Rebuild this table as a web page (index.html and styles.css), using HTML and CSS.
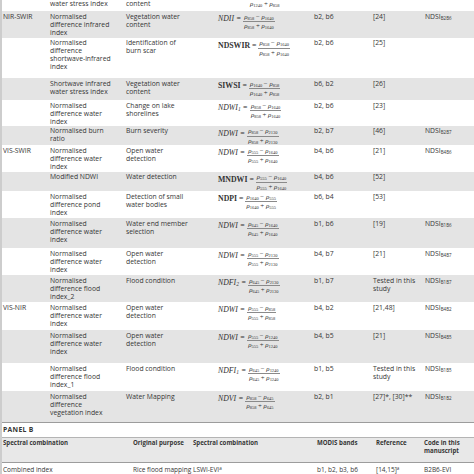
FILE: index.html
```html
<!DOCTYPE html>
<html lang="en">
<head>
<meta charset="utf-8">
<title>Spectral indices table</title>
<link rel="stylesheet" href="styles.css">
</head>
<body>
<div class="page">
<table class="pa">
<colgroup><col class="a1"><col class="a2"><col class="a3"><col class="a4"><col class="a5"><col class="a6"><col class="a7"></colgroup>
<tbody>
<tr class="h11 top">
<td></td><td>water stress index</td><td>content</td>
<td><span class="f tail"><span class="frac"><span class="den"><i>ρ</i><sub>1240</sub> + <i>ρ</i><sub>858</sub></span></span></span></td>
<td></td><td></td><td></td>
</tr>
<tr class="g h26">
<td>NIR-SWIR</td><td>Normalised<br>difference infrared<br>index</td><td>Vegetation water<br>content</td>
<td><span class="f"><span class="lbl it">NDII =</span><span class="frac"><span class="num"><i>ρ</i><sub>858</sub> − <i>ρ</i><sub>1640</sub></span><span class="den"><i>ρ</i><sub>858</sub> + <i>ρ</i><sub>1640</sub></span></span></span></td>
<td>b2, b6</td><td>[24]</td><td>NDSI<sub>B2B6</sub></td>
</tr>
<tr class="h40">
<td></td><td>Normalised<br>difference<br>shortwave-infrared<br>index</td><td>Identification of<br>burn scar</td>
<td><span class="f"><span class="lbl bd">NDSWIR =</span><span class="frac"><span class="num"><i>ρ</i><sub>858</sub> − <i>ρ</i><sub>1640</sub></span><span class="den"><i>ρ</i><sub>858</sub> + <i>ρ</i><sub>1640</sub></span></span></span></td>
<td>b2, b6</td><td>[25]</td><td></td>
</tr>
<tr class="g h22">
<td></td><td>Shortwave infrared<br>water stress index</td><td>Vegetation water<br>content</td>
<td><span class="f"><span class="lbl bd">SIWSI =</span><span class="frac"><span class="num"><i>ρ</i><sub>1640</sub> − <i>ρ</i><sub>858</sub></span><span class="den"><i>ρ</i><sub>1640</sub> + <i>ρ</i><sub>858</sub></span></span></span></td>
<td>b6, b2</td><td>[26]</td><td></td>
</tr>
<tr class="h24">
<td></td><td>Normalised<br>difference water<br>index</td><td>Change on lake<br>shorelines</td>
<td><span class="f"><span class="lbl it">NDWI<sub>1</sub> =</span><span class="frac"><span class="num"><i>ρ</i><sub>858</sub> − <i>ρ</i><sub>1640</sub></span><span class="den"><i>ρ</i><sub>858</sub> + <i>ρ</i><sub>1640</sub></span></span></span></td>
<td>b2, b6</td><td>[23]</td><td></td>
</tr>
<tr class="g h19">
<td></td><td>Normalised burn<br>ratio</td><td>Burn severity</td>
<td><span class="f"><span class="lbl it">NDWI =</span><span class="frac"><span class="num"><i>ρ</i><sub>858</sub> − <i>ρ</i><sub>2130</sub></span><span class="den"><i>ρ</i><sub>858</sub> + <i>ρ</i><sub>2130</sub></span></span></span></td>
<td>b2, b7</td><td>[46]</td><td>NDSI<sub>B2B7</sub></td>
</tr>
<tr class="h26">
<td>VIS-SWIR</td><td>Normalised<br>difference water<br>index</td><td>Open water<br>detection</td>
<td><span class="f"><span class="lbl it">NDWI =</span><span class="frac"><span class="num"><i>ρ</i><sub>555</sub> − <i>ρ</i><sub>1640</sub></span><span class="den"><i>ρ</i><sub>555</sub> + <i>ρ</i><sub>1640</sub></span></span></span></td>
<td>b4, b6</td><td>[21]</td><td>NDSI<sub>B4B6</sub></td>
</tr>
<tr class="g h19">
<td></td><td>Modified NDWI</td><td>Water detection</td>
<td><span class="f"><span class="lbl bd">MNDWI =</span><span class="frac"><span class="num"><i>ρ</i><sub>555</sub> − <i>ρ</i><sub>1640</sub></span><span class="den"><i>ρ</i><sub>555</sub> + <i>ρ</i><sub>1640</sub></span></span></span></td>
<td>b4, b6</td><td>[52]</td><td></td>
</tr>
<tr class="h27">
<td></td><td>Normalised<br>difference pond<br>index</td><td>Detection of small<br>water bodies</td>
<td><span class="f"><span class="lbl bd">NDPI =</span><span class="frac"><span class="num"><i>ρ</i><sub>1640</sub> − <i>ρ</i><sub>555</sub></span><span class="den"><i>ρ</i><sub>1640</sub> + <i>ρ</i><sub>555</sub></span></span></span></td>
<td>b6, b4</td><td>[53]</td><td></td>
</tr>
<tr class="g h30">
<td></td><td>Normalised<br>difference water<br>index</td><td>Water end member<br>selection</td>
<td><span class="f"><span class="lbl it">NDWI =</span><span class="frac"><span class="num"><i>ρ</i><sub>645</sub> − <i>ρ</i><sub>1640</sub></span><span class="den"><i>ρ</i><sub>645</sub> + <i>ρ</i><sub>1640</sub></span></span></span></td>
<td>b1, b6</td><td>[19]</td><td>NDSI<sub>B1B6</sub></td>
</tr>
<tr class="h27">
<td></td><td>Normalised<br>difference water<br>index</td><td>Open water<br>detection</td>
<td><span class="f"><span class="lbl it">NDWI =</span><span class="frac"><span class="num"><i>ρ</i><sub>555</sub> − <i>ρ</i><sub>2130</sub></span><span class="den"><i>ρ</i><sub>555</sub> + <i>ρ</i><sub>2130</sub></span></span></span></td>
<td>b4, b7</td><td>[21]</td><td>NDSI<sub>B4B7</sub></td>
</tr>
<tr class="g h27">
<td></td><td>Normalised<br>difference flood<br>index_2</td><td>Flood condition</td>
<td><span class="f"><span class="lbl it">NDFI<sub>2</sub> =</span><span class="frac"><span class="num"><i>ρ</i><sub>645</sub> − <i>ρ</i><sub>2130</sub></span><span class="den"><i>ρ</i><sub>645</sub> + <i>ρ</i><sub>2130</sub></span></span></span></td>
<td>b1, b7</td><td>Tested in this<br>study</td><td>NDSI<sub>B1B7</sub></td>
</tr>
<tr class="h28">
<td>VIS-NIR</td><td>Normalised<br>difference water<br>index</td><td>Open water<br>detection</td>
<td><span class="f"><span class="lbl it">NDWI =</span><span class="frac"><span class="num"><i>ρ</i><sub>555</sub> − <i>ρ</i><sub>858</sub></span><span class="den"><i>ρ</i><sub>555</sub> + <i>ρ</i><sub>858</sub></span></span></span></td>
<td>b4, b2</td><td>[21,48]</td><td>NDSI<sub>B4B2</sub></td>
</tr>
<tr class="g h33">
<td></td><td>Normalised<br>difference water<br>index</td><td>Open water<br>detection</td>
<td><span class="f"><span class="lbl it">NDWI =</span><span class="frac"><span class="num"><i>ρ</i><sub>555</sub> − <i>ρ</i><sub>1240</sub></span><span class="den"><i>ρ</i><sub>555</sub> + <i>ρ</i><sub>1240</sub></span></span></span></td>
<td>b4, b5</td><td>[21]</td><td>NDSI<sub>B4B5</sub></td>
</tr>
<tr class="h28">
<td></td><td>Normalised<br>difference flood<br>index_1</td><td>Flood condition</td>
<td><span class="f"><span class="lbl it">NDFI<sub>1</sub> =</span><span class="frac"><span class="num"><i>ρ</i><sub>645</sub> − <i>ρ</i><sub>1240</sub></span><span class="den"><i>ρ</i><sub>645</sub> + <i>ρ</i><sub>1240</sub></span></span></span></td>
<td>b1, b5</td><td>Tested in this<br>study</td><td>NDSI<sub>B1B5</sub></td>
</tr>
<tr class="g h31">
<td></td><td>Normalised<br>difference<br>vegetation index</td><td>Water Mapping</td>
<td><span class="f"><span class="lbl it">NDVI =</span><span class="frac"><span class="num"><i>ρ</i><sub>858</sub> − <i>ρ</i><sub>645</sub></span><span class="den"><i>ρ</i><sub>858</sub> + <i>ρ</i><sub>645</sub></span></span></span></td>
<td>b2, b1</td><td>[27]*, [30]**</td><td>NDSI<sub>B1B2</sub></td>
</tr>
</tbody>
</table>
<div class="panel">PANEL B</div>
<table class="pb">
<colgroup><col class="b1"><col class="b2"><col class="b3"><col class="b4"><col class="b5"><col class="b6"></colgroup>
<thead>
<tr><th>Spectral combination</th><th>Original purpose</th><th>Spectral combination</th><th>MODIS bands</th><th>Reference</th><th>Code in this<br>manuscript</th></tr>
</thead>
<tbody>
<tr><td>Combined index</td><td>Rice flood mapping</td><td>LSWI-EVI<sup>a</sup></td><td>b1, b2, b3, b6</td><td>[14,15]<sup>a</sup></td><td>B2B6-EVI</td></tr>
</tbody>
</table>
</div>
</body>
</html>
```

FILE: styles.css
```css
html, body {
  margin: 0;
  padding: 0;
  background: #ffffff;
}
body {
  font-family: "Open Sans", "Liberation Sans", sans-serif;
  font-size: 6.8px;
  color: #363636;
  overflow: hidden;
}
.page {
  border-left: 2px solid #cdcdcd;
}
table {
  border-collapse: collapse;
  table-layout: fixed;
  width: 472px;
}
td, th {
  padding: 1.5px 1px 0 1px;
  vertical-align: top;
  text-align: left;
  line-height: 8px;
  font-weight: normal;
  white-space: nowrap;
}
.top td {
  padding-top: 0;
}
.a1 { width: 47px; }
.a2 { width: 76px; }
.a3 { width: 92px; }
.a4 { width: 96px; }
.a5 { width: 59px; }
.a6 { width: 52px; }
.a7 { width: 50px; }

.b1 { width: 130px; }
.b2 { width: 60px; }
.b3 { width: 124px; }
.b4 { width: 59px; }
.b5 { width: 48px; }
.b6 { width: 51px; }

.g { background: #e4e4e4; }
.h11 { height: 11px; }
.h19 { height: 19.5px; }
.h22 { height: 22px; }
.h24 { height: 24px; }
.h26 { height: 26.5px; }
.h27 { height: 27px; }
.h28 { height: 28px; }
.h30 { height: 30px; }
.h31 { height: 31px; }
.h33 { height: 33px; }
.h40 { height: 40.5px; }

td sub {
  font-size: 0.66em;
  vertical-align: -0.3em;
  line-height: 0;
}
sup {
  font-size: 0.7em;
  vertical-align: 0.5em;
  line-height: 0;
}

.f {
  display: flex;
  align-items: flex-start;
  gap: 2px;
  font-family: "Liberation Serif", "DejaVu Serif", serif;
  color: #333333;
}
.f.tail {
  padding-left: 31px;
}
.lbl {
  font-size: 7.8px;
  line-height: 9px;
  padding-top: 1.5px;
}
.lbl.it { font-style: italic; }
.lbl.bd { font-weight: bold; }
.lbl sub { font-size: 0.7em; vertical-align: -0.25em; }
.frac {
  display: inline-flex;
  flex-direction: column;
  font-size: 6.8px;
  line-height: 8.5px;
}
.top .frac {
  line-height: 7px;
}
.frac > span {
  text-align: center;
  padding: 0 1px;
}
.num {
  border-bottom: 0.6px solid #8a8a8a;
}
.frac i { font-style: italic; }

.pa {
  border-bottom: 1.5px solid #9c9c9c;
}
.panel {
  height: 15px;
  padding: 3px 1px 0 1px;
  box-sizing: border-box;
  line-height: 8px;
  font-weight: bold;
  font-size: 6.8px;
  letter-spacing: 0.3px;
  border-bottom: 1px solid #b4b4b4;
}
.pb th {
  font-weight: bold;
  font-size: 6.1px;
  height: 23px;
  background: #e8e8e8;
  border-bottom: 1.5px solid #9c9c9c;
}
.pb td {
  font-size: 6.5px;
  padding-top: 2.5px;
}
```
